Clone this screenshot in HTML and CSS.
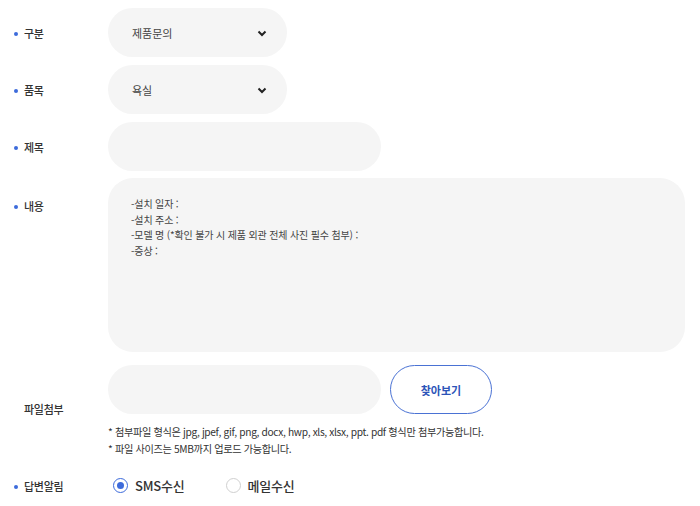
FILE: index.html
```html
<!DOCTYPE html>
<html lang="ko">
<head>
<meta charset="utf-8">
<link rel="stylesheet" href="styles.css">
</head>
<body>
<form class="form">
  <div class="row">
    <div class="label req">구분</div>
    <div class="field select"><span>제품문의</span><svg class="chev" width="10" height="7" viewBox="0 0 10 7"><path d="M1.5 1.5 L5 5 L8.5 1.5" fill="none" stroke="#222" stroke-width="2"/></svg></div>
  </div>
  <div class="row">
    <div class="label req">품목</div>
    <div class="field select"><span>욕실</span><svg class="chev" width="10" height="7" viewBox="0 0 10 7"><path d="M1.5 1.5 L5 5 L8.5 1.5" fill="none" stroke="#222" stroke-width="2"/></svg></div>
  </div>
  <div class="row">
    <div class="label req">제목</div>
    <div class="field input"></div>
  </div>
  <div class="row top">
    <div class="label req tlabel">내용</div>
    <div class="field textarea">
      <p>-설치 일자 :</p>
      <p>-설치 주소 :</p>
      <p>-모델 명 (*확인 불가 시 제품 외관 전체 사진 필수 첨부) :</p>
      <p>-증상 :</p>
    </div>
  </div>
  <div class="row top filerow">
    <div class="label flabel">파일첨부</div>
    <div class="filecol">
      <div class="fileline">
        <div class="field input"></div>
        <button type="button" class="btn">찾아보기</button>
      </div>
      <p class="note">* 첨부파일 형식은 jpg, jpef, gif, png, docx, hwp, xls, xlsx, ppt. pdf 형식만 첨부가능합니다.</p>
      <p class="note">* 파일 사이즈는 5MB까지 업로드 가능합니다.</p>
    </div>
  </div>
  <div class="row radiorow">
    <div class="label req">답변알림</div>
    <div class="radios">
      <label class="radio"><span class="circle on"></span>SMS수신</label>
      <label class="radio"><span class="circle"></span>메일수신</label>
    </div>
  </div>
</form>
</body>
</html>
```
FILE: styles.css
```css
* { box-sizing: border-box; }
body {
  margin: 0;
  background: #fff;
  font-family: "Noto Sans CJK KR", "Noto Sans", sans-serif;
  color: #333;
}
.form {
  padding-top: 8px;
  display: flex;
  flex-direction: column;
  gap: 8px;
}
.row {
  display: flex;
  align-items: center;
}
.row.top { align-items: flex-start; }
.label {
  width: 108px;
  padding-left: 24px;
  position: relative;
  font-size: 11px;
  font-weight: 500;
  color: #333;
  letter-spacing: -0.3px;
}
.label.req::before {
  content: "";
  position: absolute;
  left: 14px;
  top: 50%;
  width: 4px;
  height: 4px;
  margin-top: -1px;
  border-radius: 50%;
  background: #3d6bdb;
}
.field {
  background: #f5f5f5;
  height: 49px;
  border-radius: 25px;
}
.select {
  width: 179px;
  display: flex;
  align-items: center;
  justify-content: space-between;
  padding: 0 20px 0 24px;
  font-size: 11px;
  color: #444;
}
.chev { margin-top: 1px; }
.input { width: 273px; }
.textarea {
  width: 577px;
  height: 174px;
  margin-top: -1px;
  padding: 18px 23px;
  font-size: 10px;
  line-height: 15.7px;
  color: #444;
  letter-spacing: -0.15px;
}
.textarea p { margin: 0; }
.tlabel { margin-top: 19px; }
.filerow { margin-top: 5px; }
.flabel { margin-top: 36px; }
.filecol { display: flex; flex-direction: column; }
.fileline { display: flex; gap: 9px; margin-bottom: 9px; }
.btn {
  width: 102px;
  height: 49px;
  border: 1px solid #4a72d4;
  border-radius: 25px;
  background: #fff;
  color: #2c54b8;
  font-family: inherit;
  font-size: 11px;
  font-weight: 700;
  padding: 0;
}
.note {
  margin: 0;
  font-size: 10.2px;
  line-height: 17px;
  color: #333;
  font-weight: 400;
  letter-spacing: -0.35px;
}
.radiorow { margin-top: 11px; }
.radios { display: flex; align-items: center; gap: 41px; padding-left: 5px; }
.radio {
  display: flex;
  align-items: center;
  gap: 7px;
  font-size: 13px;
  font-weight: 500;
  color: #333;
  letter-spacing: -0.2px;
}
.circle {
  width: 15px;
  height: 15px;
  border-radius: 50%;
  border: 1px solid #d0d0d0;
  background: #fff;
  position: relative;
}
.circle.on { border-color: #3d6bdb; }
.circle.on::after {
  content: "";
  position: absolute;
  left: 3px;
  top: 3px;
  width: 7px;
  height: 7px;
  border-radius: 50%;
  background: #3d6bdb;
}
```
